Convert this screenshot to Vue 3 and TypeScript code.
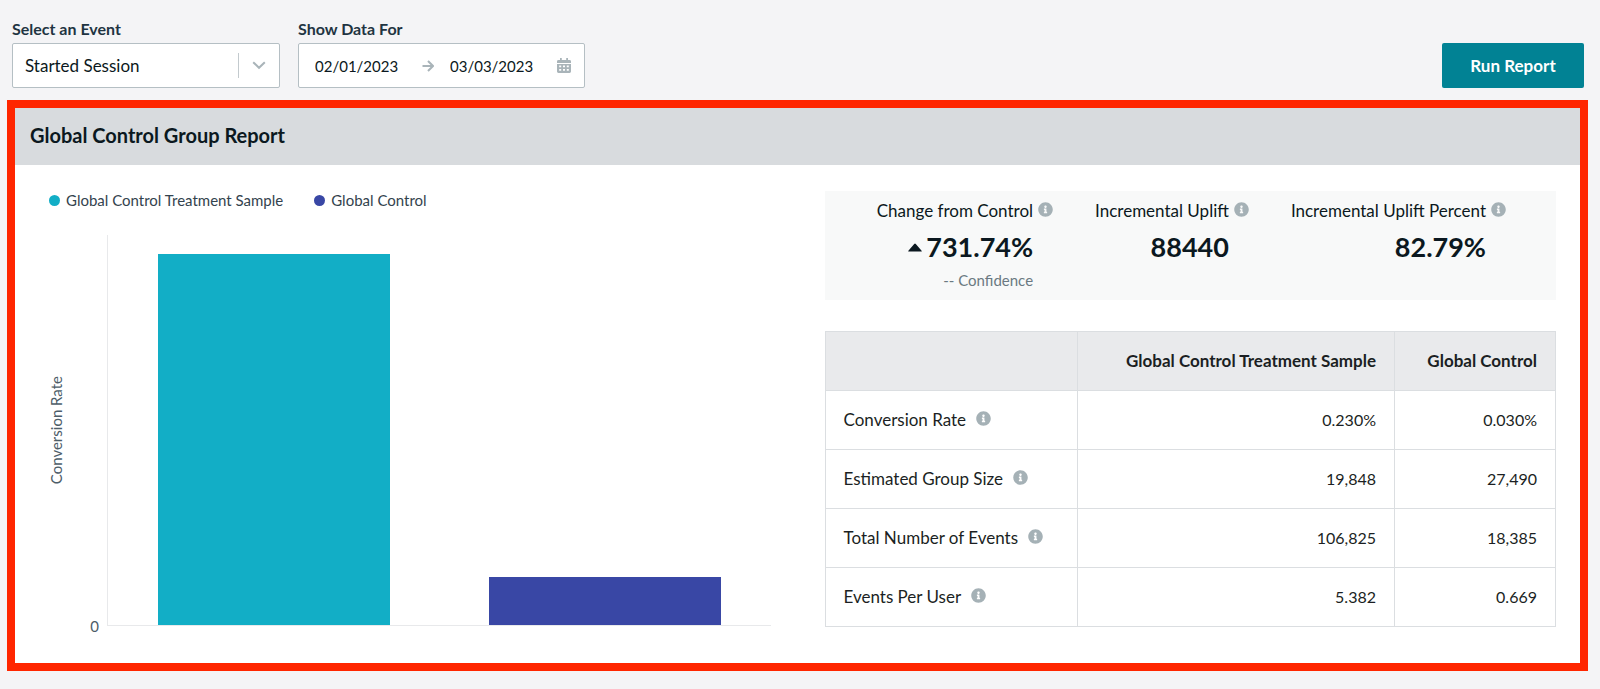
<script setup lang="ts">
import { ref } from 'vue'

interface Series {
  name: string
  color: string
  share: number
}

interface Stat {
  label: string
  value: string
  rising?: boolean
  note?: string
}

interface Row {
  label: string
  treatment: string
  control: string
}

const selectedEvent = ref('Started Session')
const startDate = ref('02/01/2023')
const endDate = ref('03/03/2023')

const series: Series[] = [
  { name: 'Global Control Treatment Sample', color: '#12aec6', share: 95.2 },
  { name: 'Global Control', color: '#3947a5', share: 12.2 },
]

const stats: Stat[] = [
  { label: 'Change from Control', value: '731.74%', rising: true, note: '-- Confidence' },
  { label: 'Incremental Uplift', value: '88440' },
  { label: 'Incremental Uplift Percent', value: '82.79%' },
]

const rows: Row[] = [
  { label: 'Conversion Rate', treatment: '0.230%', control: '0.030%' },
  { label: 'Estimated Group Size', treatment: '19,848', control: '27,490' },
  { label: 'Total Number of Events', treatment: '106,825', control: '18,385' },
  { label: 'Events Per User', treatment: '5.382', control: '0.669' },
]

const infoPath =
  'M256 8C119 8 8 119 8 256s111 248 248 248 248-111 248-248S393 8 256 8zm0 110c23.2 0 42 18.8 42 42s-18.8 42-42 42-42-18.8-42-42 18.8-42 42-42zm56 254c0 6.6-5.4 12-12 12h-88c-6.6 0-12-5.4-12-12v-24c0-6.6 5.4-12 12-12h12v-64h-12c-6.6 0-12-5.4-12-12v-24c0-6.6 5.4-12 12-12h64c6.6 0 12 5.4 12 12v100h12c6.6 0 12 5.4 12 12v24z'
</script>

<template>
  <main class="page">
    <form class="filters" @submit.prevent>
      <div class="field event-field">
        <label for="event">Select an Event</label>
        <div class="box">
          <select id="event" v-model="selectedEvent">
            <option>Started Session</option>
          </select>
          <span class="caret">
            <svg width="14" height="9" viewBox="0 0 14 9" aria-hidden="true">
              <path d="M1.2 1.2L7 6.8l5.800-5.600" />
            </svg>
          </span>
        </div>
      </div>

      <div class="field date-field">
        <label for="start">Show Data For</label>
        <div class="box dates">
          <input id="start" v-model="startDate" type="text" />
          <svg class="arrow" width="12" height="12" viewBox="0 0 12 12" aria-hidden="true">
            <path d="M0.500 6h10M6 1l5 5-5 5" />
          </svg>
          <input id="end" v-model="endDate" type="text" aria-label="End date" />
          <svg class="calendar" width="14" height="15" viewBox="0 0 14 15" aria-hidden="true">
            <path
              fill-rule="evenodd"
              d="M3 0h1.800v2h4.400V0H11v2h1.500Q14 2 14 3.400V5H0V3.400Q0 2 1.500 2H3zM0 6h14v7.600q0 1.400-1.400 1.400H1.400Q0 15 0 13.600zM2.200 7.500v1.800h2v-1.800zm3.800 0v1.800h2v-1.800zm3.800 0v1.800h2v-1.800zM2.200 11v1.800h2V11zm3.800 0v1.800h2V11zm3.800 0v1.800h2V11z"
            />
          </svg>
        </div>
      </div>

      <button class="run" type="submit">Run Report</button>
    </form>

    <section class="report">
      <h1>Global Control Group Report</h1>
      <div class="body">
        <div class="chart">
          <ul class="legend">
            <li v-for="s in series" :key="s.name">
              <span class="dot" :style="{ background: s.color }"></span>{{ s.name }}
            </li>
          </ul>
          <div class="graph">
            <div class="axis-title"><span>Conversion Rate</span></div>
            <div class="ticks"><span>0</span></div>
            <div class="plot">
              <div v-for="s in series" :key="s.name" class="band">
                <div class="bar" :style="{ height: s.share + '%', background: s.color }"></div>
              </div>
            </div>
          </div>
        </div>

        <div class="figures">
          <div class="stats">
            <div v-for="s in stats" :key="s.label" class="stat">
              <div class="stat-label">
                {{ s.label }}
                <svg class="info" viewBox="0 0 512 512" aria-hidden="true"><path :d="infoPath" /></svg>
              </div>
              <div class="stat-value">
                <svg v-if="s.rising" class="rise" width="14" height="9" viewBox="0 0 14 9" aria-hidden="true">
                  <path d="M0.600 8.500Q-0.200 8.300 0.600 7.400L6.200 0.900Q7 0.100 7.800 0.900l5.600 6.500q0.800 0.900 0 1.100z" />
                </svg>
                {{ s.value }}
              </div>
              <div v-if="s.note" class="stat-note">{{ s.note }}</div>
            </div>
          </div>

          <table>
            <thead>
              <tr>
                <td></td>
                <th scope="col">Global Control Treatment Sample</th>
                <th scope="col">Global Control</th>
              </tr>
            </thead>
            <tbody>
              <tr v-for="r in rows" :key="r.label">
                <th scope="row">
                  <span class="row-label">
                    {{ r.label }}
                    <svg class="info" viewBox="0 0 512 512" aria-hidden="true"><path :d="infoPath" /></svg>
                  </span>
                </th>
                <td>{{ r.treatment }}</td>
                <td>{{ r.control }}</td>
              </tr>
            </tbody>
          </table>
        </div>
      </div>
    </section>
  </main>
</template>

<style>
body {
  margin: 0;
  background: #f4f4f6;
}
</style>

<style scoped>
.page {
  padding: 19px 12px 18px 7px;
  color: #0b1820;
  font-family: Lato, 'Liberation Sans', sans-serif;
  font-size: 17px;
  line-height: 20px;
}

.filters {
  display: flex;
  align-items: flex-end;
  gap: 18px;
  padding: 0 4px 12px 5px;
}

.field {
  display: flex;
  flex-direction: column;
  gap: 4px;
}

.field label {
  color: #1f3442;
  font-size: 16px;
  font-weight: 700;
}

.box {
  position: relative;
  display: flex;
  align-items: center;
  box-sizing: border-box;
  height: 45px;
  border: 1px solid #b5bfc4;
  border-radius: 2px;
  background: #fff;
}

.event-field {
  width: 268px;
}

.date-field {
  width: 287px;
}

select,
input {
  min-width: 0;
  margin: 0;
  border: 0;
  outline: 0;
  background: transparent;
  color: #0b1820;
  font: inherit;
}

select {
  width: 100%;
  height: 100%;
  padding: 0 56px 0 12px;
  appearance: none;
}

.caret {
  position: absolute;
  top: 9px;
  right: 0;
  bottom: 9px;
  display: flex;
  align-items: center;
  padding: 0 13px;
  border-left: 1px solid #c3cace;
  pointer-events: none;
}

.caret path,
.arrow path {
  fill: none;
  stroke: #a9b4b9;
  stroke-width: 2;
}

.dates {
  padding: 0 13px 0 16px;
}

.dates input {
  flex: 1;
  padding: 0;
  font-size: 15px;
}

.arrow {
  margin-right: 16px;
}

.calendar {
  fill: #a9b4b9;
}

.run {
  width: 142px;
  height: 45px;
  margin-left: auto;
  padding: 0;
  border: 0;
  border-radius: 2px;
  background: #018294;
  color: #fff;
  font: inherit;
  font-weight: 700;
}

.report {
  border: 8px solid #ff2600;
  background: #fff;
}

h1 {
  margin: 0;
  padding: 15px 15px 18px;
  background: #d8dbde;
  font-size: 20px;
  font-weight: 700;
  line-height: 24px;
}

.body {
  display: grid;
  grid-template-columns: 1fr 1fr;
  gap: 54px;
  padding: 26px 24px 36px;
}

.chart {
  display: flex;
  flex-direction: column;
  gap: 26px;
  padding-bottom: 1px;
}

.legend {
  display: flex;
  gap: 31px;
  margin: 0;
  padding: 0 0 0 10px;
  color: #33434e;
  font-size: 15px;
  line-height: 18px;
  list-style: none;
}

.legend li {
  display: flex;
  align-items: center;
  gap: 6px;
}

.dot {
  width: 11px;
  height: 11px;
  border-radius: 50%;
}

.graph {
  display: flex;
  flex: 1;
  color: #4d5d68;
  font-size: 15px;
}

.axis-title {
  display: flex;
  align-items: center;
  padding-left: 7px;
}

.axis-title span {
  writing-mode: vertical-rl;
  transform: rotate(180deg);
}

.ticks {
  display: flex;
  flex: 0 0 41px;
  align-items: flex-end;
  justify-content: flex-end;
  box-sizing: border-box;
  padding-right: 8px;
}

.ticks span {
  margin-bottom: -10px;
}

.plot {
  display: flex;
  flex: 1;
  border-bottom: 1px solid #e8e9eb;
  border-left: 1px solid #e8e9eb;
}

.band {
  display: flex;
  flex: 1;
  align-items: flex-end;
  justify-content: center;
}

.bar {
  width: 70%;
}

.figures {
  display: flex;
  flex-direction: column;
  gap: 31px;
}

.stats {
  display: flex;
  justify-content: flex-end;
  gap: 42px;
  box-sizing: border-box;
  min-height: 109px;
  padding: 10px 50px 9px;
  background: #f8f9f9;
}

.stat {
  text-align: right;
}

.stat-label,
.row-label {
  display: flex;
  align-items: center;
  gap: 5px;
}

.row-label {
  gap: 10px;
}

.info {
  width: 15px;
  height: 15px;
  margin-bottom: 4px;
  fill: #a5b1b6;
}

.stat-value {
  display: flex;
  align-items: center;
  justify-content: flex-end;
  gap: 4px;
  margin: 10px 20px 7px 0;
  font-size: 27px;
  font-weight: 700;
  line-height: 32px;
}

.rise {
  fill: #0b1820;
}

.stat-note {
  margin-right: 20px;
  color: #6b7982;
  font-size: 15px;
}

table {
  width: 100%;
  border-collapse: collapse;
  color: #1b1f23;
}

th,
td {
  height: 58px;
  padding: 0 18px;
  border: 1px solid #dbdee1;
  text-align: right;
}

td {
  font-size: 16px;
}

thead {
  background: #e9eaec;
}

tbody th {
  font-weight: 400;
}

tr > :first-child {
  width: 215px;
}

tr > :last-child {
  width: 124px;
}
</style>
